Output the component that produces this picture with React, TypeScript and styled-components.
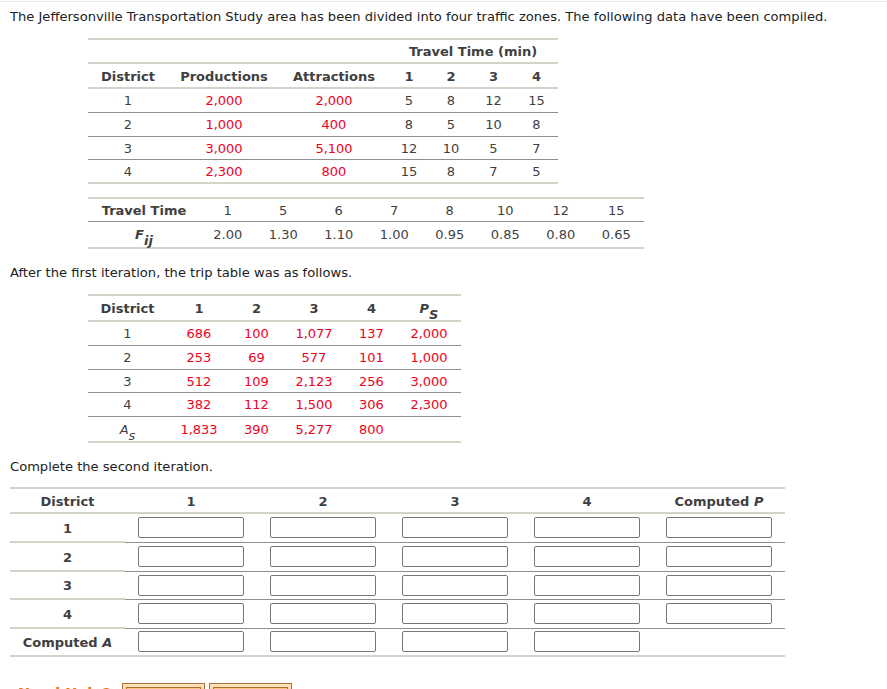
import React from "react";
import styled, { createGlobalStyle } from "styled-components";

const Global = createGlobalStyle`
  html, body { margin: 0; padding: 0; background: #fff; height: 689px; overflow: hidden; }
  body { font-family: "DejaVu Sans", Verdana, sans-serif; font-size: 13px; color: #333; }
`;
const Page = styled.div`
  width: 887px; height: 688px; overflow: hidden; box-sizing: border-box; margin-top: 1px;
  border-top: 1px solid #e6e6e6; padding: 7px 0 0 10px;
`;
const Para = styled.p<{ $h: number; $pt?: number }>`
  margin: 0; box-sizing: border-box; height: ${p => p.$h}px; padding-top: ${p => p.$pt ?? 0}px;
  line-height: 15px; color: #222; white-space: nowrap; font-size: 13.08px;
`;
const DataTable = styled.table<{ $w: number; $ml?: number; $mt?: number }>`
  border-collapse: collapse; table-layout: fixed; width: ${p => p.$w}px;
  margin-left: ${p => p.$ml ?? 78}px; margin-top: ${p => p.$mt ?? 0}px;
  border-top: 2px solid #d5d2c8; border-bottom: 2px solid #d5d2c8;
`;
const Col = styled.col<{ $w: number }>`
  width: ${p => p.$w}px;
`;
const Row = styled.tr<{ $h: number; $thick?: boolean; $plain?: boolean }>`
  height: ${p => p.$h}px;
  border-bottom: ${p => p.$plain ? "none" : p.$thick ? "2px solid #d5d2c8" : "1px solid #8f8f8f"};
`;
const Cell = styled.td<{ $red?: boolean; $b?: boolean; $rule?: boolean }>`
  padding: 1px 0 0; text-align: center; white-space: nowrap;
  color: ${p => p.$red ? "#f0001c" : "#3f3f3f"};
  font-weight: ${p => p.$b ? 700 : 400};
  border-bottom: ${p => p.$rule ? "2px solid #d5d2c8" : "inherit"};
`;
const FieldCell = styled(Cell)`
  padding: 0;
`;
const Sub = styled.sub`
  font-size: 13px; font-style: italic; line-height: 0; vertical-align: -6px;
`;
const Field = styled.input`
  display: block; box-sizing: border-box; width: 106px; height: 21px; margin: 0 auto; padding: 0;
  border: 1px solid #767676; border-radius: 2px; background: #fff;
`;
const HelpRow = styled.div`
  display: flex; align-items: flex-start; margin-top: 26px; margin-left: 8px;
`;
const HelpText = styled.span`
  color: #e8780c; font-weight: 700; font-size: 14.5px; line-height: 15px; margin-top: 3px; width: 104px; white-space: nowrap;
`;
const HelpButton = styled.div`
  box-sizing: border-box; width: 83px; height: 22px; margin-right: 4px;
  background: linear-gradient(#fde3bf, #f9b164);
  border: 1px solid #ad7233; padding: 3px;
`;
const HelpInner = styled.div`
  height: 100%; border: 1px solid #ad7233; background: #fbc483;
`;

const t1 = [
  ["1", "2,000", "2,000", "5", "8", "12", "15"],
  ["2", "1,000", "400", "8", "5", "10", "8"],
  ["3", "3,000", "5,100", "12", "10", "5", "7"],
  ["4", "2,300", "800", "15", "8", "7", "5"],
];
const t1h = [24, 24, 23, 24];
const t3 = [
  ["1", "686", "100", "1,077", "137", "2,000"],
  ["2", "253", "69", "577", "101", "1,000"],
  ["3", "512", "109", "2,123", "256", "3,000"],
  ["4", "382", "112", "1,500", "306", "2,300"],
];
const t3h = [24, 24, 23, 24];
const times = ["1", "5", "6", "7", "8", "10", "12", "15"];
const fs = ["2.00", "1.30", "1.10", "1.00", "0.95", "0.85", "0.80", "0.65"];
const heights4 = [29, 29, 28, 29];

export default function App() {
  return (
    <Page>
      <Global />
      <Para $h={29}>The Jeffersonville Transportation Study area has been divided into four traffic zones. The following data have been compiled.</Para>
      <DataTable $w={470}>
        <colgroup>
          {[80, 112, 108, 42, 42, 43, 43].map((w, i) => <Col key={i} $w={w} />)}
        </colgroup>
        <tbody>
          <Row $h={24} $thick><Cell colSpan={3} /><Cell colSpan={4} $b>Travel Time (min)</Cell></Row>
          <Row $h={25} $thick>
            {["District", "Productions", "Attractions", "1", "2", "3", "4"].map((h, i) => <Cell key={i} $b>{h}</Cell>)}
          </Row>
          {t1.map((r, i) => (
            <Row key={i} $h={t1h[i]} $plain={i === 3}>
              {r.map((c, j) => <Cell key={j} $red={j === 1 || j === 2}>{c}</Cell>)}
            </Row>
          ))}
        </tbody>
      </DataTable>
      <DataTable $w={556} $mt={13}>
        <colgroup>
          <Col $w={112} />
          {times.map((_, i) => <Col key={i} $w={55.5} />)}
        </colgroup>
        <tbody>
          <Row $h={23}><Cell $b>Travel Time</Cell>{times.map(t => <Cell key={t}>{t}</Cell>)}</Row>
          <Row $h={27} $plain><Cell $b><i>F<Sub>ij</Sub></i></Cell>{fs.map(f => <Cell key={f}>{f}</Cell>)}</Row>
        </tbody>
      </DataTable>
      <Para $h={45} $pt={16}>After the first iteration, the trip table was as follows.</Para>
      <DataTable $w={373}>
        <colgroup>
          {[79, 64, 51, 64, 51, 64].map((w, i) => <Col key={i} $w={w} />)}
        </colgroup>
        <tbody>
          <Row $h={26} $thick>
            {["District", "1", "2", "3", "4"].map((h, i) => <Cell key={i} $b>{h}</Cell>)}
            <Cell $b><i>P<Sub>S</Sub></i></Cell>
          </Row>
          {t3.map((r, i) => (
            <Row key={i} $h={t3h[i]}>
              {r.map((c, j) => <Cell key={j} $red={j > 0}>{c}</Cell>)}
            </Row>
          ))}
          <Row $h={26} $plain>
            <Cell><i>A<Sub>s</Sub></i></Cell>
            {["1,833", "390", "5,277", "800"].map(c => <Cell key={c} $red>{c}</Cell>)}
            <Cell />
          </Row>
        </tbody>
      </DataTable>
      <Para $h={44} $pt={16}>Complete the second iteration.</Para>
      <DataTable $w={775} $ml={0}>
        <colgroup>
          <Col $w={115} />
          {[0, 1, 2, 3, 4].map(i => <Col key={i} $w={132} />)}
        </colgroup>
        <tbody>
          <Row $h={25} $thick>
            {["District", "1", "2", "3", "4"].map((h, i) => <Cell key={i} $b>{h}</Cell>)}
            <Cell $b>Computed <i>P</i></Cell>
          </Row>
          {heights4.map((h, i) => (
            <Row key={i} $h={h}>
              <Cell $b $rule>{i + 1}</Cell>
              {[0, 1, 2, 3, 4].map(j => <FieldCell key={j}><Field /></FieldCell>)}
            </Row>
          ))}
          <Row $h={28} $plain>
            <Cell $b>Computed <i>A</i></Cell>
            {[0, 1, 2, 3].map(j => <FieldCell key={j}><Field /></FieldCell>)}
            <Cell />
          </Row>
        </tbody>
      </DataTable>
      <HelpRow>
        <HelpText>Need Help?</HelpText>
        <HelpButton><HelpInner /></HelpButton>
        <HelpButton><HelpInner /></HelpButton>
      </HelpRow>
    </Page>
  );
}
